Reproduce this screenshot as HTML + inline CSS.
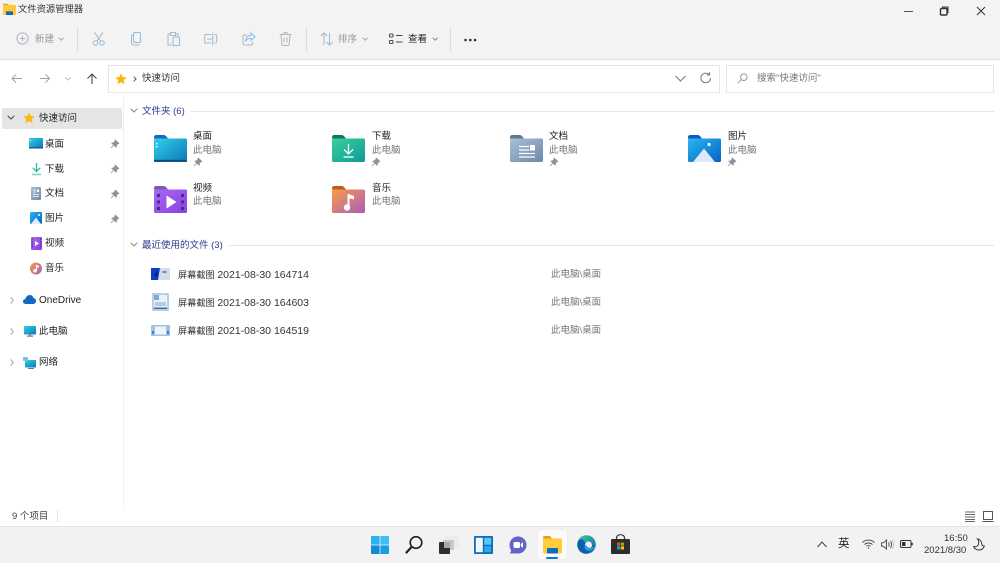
<!DOCTYPE html>
<html lang="zh"><head><meta charset="utf-8"><title>文件资源管理器</title>
<style>
html,body{margin:0;padding:0;background:#fff}
#r{position:relative;width:1000px;height:563px;overflow:hidden;background:#fff;font-family:"Liberation Sans","Noto Sans CJK SC",sans-serif;color:#222;filter:blur(.3px)}
#r div,#r svg{position:absolute}
.t{font-size:9.5px;line-height:14px;white-space:nowrap;margin-top:1px}
.u{margin-top:2px}
.n{font-size:10.5px}
.g{color:#767676}
.h{color:#2b3a8c}
.d{color:#9a9a9a}
svg{overflow:visible}
</style></head><body><div id="r">
<svg width="0" height="0"><defs>
<g id="pin"><path d="M5.2 1 8.8 4.4 7.5 4.9 6.3 6.8 6.1 8.2 1.9 4.2 3.4 3.9 4.9 2.5Z M3.6 6.4 1 9" fill="#8b939b" stroke="#8b939b" stroke-width=".8"/></g>
<linearGradient id="gBlue" x1="0" y1="0" x2="1" y2="1"><stop offset="0" stop-color="#32d0e6"/><stop offset="1" stop-color="#0a78b8"/></linearGradient>
<linearGradient id="gGreen" x1="0" y1="0" x2="1" y2="1"><stop offset="0" stop-color="#38d196"/><stop offset="1" stop-color="#0e9a9a"/></linearGradient>
<linearGradient id="gDoc" x1="0" y1="0" x2="1" y2="1"><stop offset="0" stop-color="#a9bfd8"/><stop offset="1" stop-color="#6d89a6"/></linearGradient>
<linearGradient id="gPic" x1="0" y1="0" x2="1" y2="1"><stop offset="0" stop-color="#29b6f0"/><stop offset="1" stop-color="#0563c1"/></linearGradient>
<linearGradient id="gVid" x1="0" y1="0" x2="1" y2="1"><stop offset="0" stop-color="#a968ea"/><stop offset="1" stop-color="#8a3fe8"/></linearGradient>
<linearGradient id="gMus" x1="0" y1="0" x2="1" y2="1"><stop offset="0" stop-color="#fb9a4a"/><stop offset="1" stop-color="#a95db8"/></linearGradient>
<linearGradient id="gEdge" x1="0" y1="0" x2="1" y2="1"><stop offset="0" stop-color="#3fd08a"/><stop offset="1" stop-color="#0a63b8"/></linearGradient>
<g id="star"><path d="M6 .4 7.700 4 11.700 4.500 8.800 7.200 9.600 11.200 6 9.200 2.400 11.200 3.200 7.200 .3 4.500 4.300 4Z" fill="#f9b90f"/></g>
<path id="chevD" d="M0 0 3 3 6 0" fill="none" stroke-linecap="round"/>
<path id="chevS" d="M0 0 2.200 2.200 4.400 0" fill="none" stroke-linecap="round"/>
</defs></svg>

<!-- top chrome -->
<div style="left:0;top:0;width:1000px;height:59px;background:#f3f3f3;border-bottom:1px solid #e2e2e2"></div>
<svg style="left:3px;top:3px" width="13" height="12" viewBox="0 0 13 12"><path d="M0 1.500C0 1 .4.700 1 .7H4.500L6 2H0Z" fill="#e8a80f"/><rect y="2" width="13" height="10" rx="1" fill="#ffc83d"/><rect x="3" y="8.400" width="7" height="3.600" fill="#0f6cbd"/></svg>
<div class="t" style="left:18px;top:1px;color:#333;font-size:9.3px">文件资源管理器</div>
<!-- window controls -->
<svg style="left:900px;top:5px" width="90" height="12" viewBox="0 0 90 12" fill="none" stroke="#333"><path d="M4 6.500H13" stroke="#555"/><rect x="40.500" y="3.500" width="6.500" height="6.500" rx="1" stroke-width="1.400"/><path d="M42.500 3V2H48V7.500H47.300" stroke-width="1"/><path d="M77 2 85 10M85 2 77 10"/></svg>

<!-- toolbar -->
<svg style="left:16px;top:32px" width="14" height="14" viewBox="0 0 14 14" fill="none"><circle cx="6.500" cy="6.500" r="5.600" stroke="#b5b5b5"/><path d="M6.500 3.800V9.200M3.800 6.500H9.200" stroke="#8dbce4"/></svg>
<div class="t d" style="left:35px;top:32px">新建</div>
<svg style="left:59px;top:38px" width="5" height="3" stroke="#a5a5a5"><use href="#chevS"/></svg>
<div style="left:77px;top:27px;width:1px;height:25px;background:#dcdcdc"></div>
<div style="left:306px;top:27px;width:1px;height:25px;background:#dcdcdc"></div>
<div style="left:450px;top:27px;width:1px;height:25px;background:#dcdcdc"></div>
<svg style="left:92px;top:32px" width="14" height="14" viewBox="0 0 14 14" fill="none"><path d="M2.500 .5 8.500 9M11 .5 5 9" stroke="#b0b0b0"/><circle cx="3.500" cy="11" r="2.200" stroke="#8dbce4"/><circle cx="10" cy="11" r="2.200" stroke="#8dbce4"/></svg>
<svg style="left:130px;top:32px" width="13" height="14" viewBox="0 0 13 14" fill="none"><rect x="3.500" y=".5" width="7" height="10" rx="1.500" stroke="#8dbce4"/><path d="M3 2.500C1.800 3 1.500 3.500 1.500 4.500V10.500C1.500 12 2.500 13 4 13H8C8.800 13 9.300 12.500 9.500 12" stroke="#b5b5b5"/></svg>
<svg style="left:167px;top:32px" width="14" height="14" viewBox="0 0 14 14" fill="none"><path d="M3.500 2H1V13H5M8.500 2H11V4.500" stroke="#b5b5b5"/><rect x="3.500" y=".5" width="5" height="3" stroke="#b5b5b5"/><rect x="6" y="5" width="6.500" height="8.500" rx="1" stroke="#8dbce4"/></svg>
<svg style="left:204px;top:32px" width="14" height="14" viewBox="0 0 14 14" fill="none"><path d="M7 2.500H1.500C1 2.500.7 3 .7 3.500V10C.7 10.600 1 11 1.500 11H7M10.500 2.500H11.500C12.200 2.500 12.700 3 12.700 3.500V10C12.700 10.600 12.200 11 11.500 11H10.500" stroke="#b5b5b5"/><path d="M8.800 .5V13.500M3 7H8" stroke="#8dbce4"/></svg>
<svg style="left:242px;top:32px" width="14" height="14" viewBox="0 0 14 14" fill="none"><path d="M5 3H2.500C1.500 3 1 3.500 1 4.500V11.500C1 12.500 1.500 13 2.500 13H9C10 13 10.500 12.500 10.500 11.500V10" stroke="#b5b5b5"/><path d="M9 1 13 4.800 9 8.500V6.300C6.500 6.300 4.800 7.300 3.500 9.500 3.700 6 5.500 3.500 9 3.300Z" stroke="#8dbce4"/></svg>
<svg style="left:279px;top:32px" width="13" height="14" viewBox="0 0 13 14" fill="none" stroke="#b5b5b5"><path d="M.5 2.500H12.500M4.500 2.500C4.500 1 5 .5 6.500 .5S8.500 1 8.500 2.500M2 2.500 2.800 12C2.900 13 3.400 13.500 4.300 13.500H8.700C9.600 13.500 10.100 13 10.200 12L11 2.500M5 5.500V10.500M8 5.500V10.500"/></svg>
<svg style="left:320px;top:32px" width="14" height="14" viewBox="0 0 14 14" fill="none"><path d="M4 13V1M.8 4 4 .8 7.200 4" stroke="#b5b5b5"/><path d="M9.500 .8V13M6.500 10 9.500 13 12.800 10" stroke="#8dbce4"/></svg>
<div class="t d" style="left:338px;top:32px">排序</div>
<svg style="left:363px;top:38px" width="5" height="3" stroke="#a5a5a5"><use href="#chevS"/></svg>
<svg style="left:389px;top:33px" width="14" height="12" viewBox="0 0 14 12" fill="none" stroke="#444"><rect x=".5" y="1" width="3.500" height="3" rx="1"/><rect x=".5" y="7.500" width="3.500" height="3" rx="1"/><path d="M7 2.500H13.500M7 9H13.500"/></svg>
<div class="t" style="left:408px;top:32px;color:#222">查看</div>
<svg style="left:433px;top:38px" width="5" height="3" stroke="#888"><use href="#chevS"/></svg>
<svg style="left:464px;top:38px" width="13" height="4"><circle cx="1.500" cy="2" r="1.300" fill="#333"/><circle cx="6.300" cy="2" r="1.300" fill="#333"/><circle cx="11.100" cy="2" r="1.300" fill="#333"/></svg>

<!-- nav row -->
<svg style="left:11px;top:73px" width="90" height="12" viewBox="0 0 90 12" fill="none"><path d="M11 5.500H1M5 1.500 1 5.500 5 9.500" stroke="#a2a2a2"/><path d="M29 5.500H38.500M34.500 1.500 38.500 5.500 34.500 9.500" stroke="#a2a2a2"/><path d="M54 4.500 57 7 60 4.500" stroke="#bdbdbd"/><path d="M81 11V1.300M76.500 5.500 81 1 85.500 5.500" stroke="#444" stroke-width="1.100"/></svg>
<div style="left:108px;top:65px;width:610px;height:26px;border:1px solid #e5e5e5;background:#fff"></div>
<svg style="left:115px;top:73px" width="12" height="12"><use href="#star"/></svg>
<svg style="left:133px;top:76px" width="4" height="6" viewBox="0 0 4 6" fill="none" stroke="#555"><path d="M.7.700 3 3 .7 5.300"/></svg>
<div class="t" style="left:142px;top:71px;color:#333">快速访问</div>
<svg style="left:675px;top:75px" width="11" height="7" viewBox="0 0 11 7" fill="none" stroke="#777"><path d="M.5 1 5.500 6 10.500 1"/></svg>
<svg style="left:700px;top:72px" width="12" height="12" viewBox="0 0 12 12" fill="none" stroke="#777"><path d="M10.500 6A4.800 4.800 0 1 1 9 2.500M9.500 .3V3H6.800"/></svg>
<div style="left:726px;top:65px;width:266px;height:26px;border:1px solid #e5e5e5;background:#fff"></div>
<svg style="left:737px;top:73px" width="11" height="11" viewBox="0 0 11 11" fill="none" stroke="#999"><circle cx="6.800" cy="4.200" r="3.300"/><path d="M4.300 6.700 .8 10.200"/></svg>
<div class="t g" style="left:757px;top:71px">搜索"快速访问"</div>

<!-- sidebar -->
<div style="left:123px;top:96px;width:1px;height:410px;background:#efefef"></div>
<div style="left:2px;top:108px;width:120px;height:21px;background:#e5e5e5;border-radius:2px"></div>
<svg style="left:8px;top:116px;" width="7" height="5" stroke="#444"><use href="#chevD"/></svg>
<svg style="left:23px;top:112px" width="12" height="12"><use href="#star"/></svg>
<div class="t" style="left:39px;top:111px">快速访问</div>

<svg style="left:29px;top:138px" width="14" height="11" viewBox="0 0 14 11"><rect width="14" height="10.500" rx="1" fill="url(#gBlue)"/><rect y="9.300" width="14" height="1.200" fill="#0b4f7a"/><rect x="1" y="2" width="1" height="1" fill="#fff"/></svg>
<div class="t u" style="left:45px;top:136px">桌面</div>
<svg style="left:110px;top:139px" width="10" height="10"><use href="#pin"/></svg>

<svg style="left:31px;top:162px" width="11" height="14" viewBox="0 0 11 14" fill="none" stroke-width="1.300"><path d="M5.500 1V9M1.800 5.800 5.500 9.500 9.200 5.800" stroke="#2fb89c"/><path d="M1 12.500H10" stroke="#6ed4bd" stroke-width="1.500"/></svg>
<div class="t u" style="left:45px;top:161px">下载</div>
<svg style="left:110px;top:164px" width="10" height="10"><use href="#pin"/></svg>

<svg style="left:31px;top:187px" width="10" height="13" viewBox="0 0 10 13"><rect width="10" height="13" rx="1" fill="url(#gDoc)"/><path d="M2 3H5M2 5H5M2 7.500H8M2 9.500H8" stroke="#fff" stroke-width=".8"/><rect x="6" y="2.500" width="2" height="2.500" fill="#fff"/></svg>
<div class="t" style="left:45px;top:186px">文档</div>
<svg style="left:110px;top:189px" width="10" height="10"><use href="#pin"/></svg>

<svg style="left:30px;top:212px" width="12" height="12" viewBox="0 0 12 12"><rect width="12" height="12" rx="1" fill="url(#gPic)"/><path d="M1 12 6 5.500 11 12Z" fill="#dfeaff"/><circle cx="9" cy="3" r="1" fill="#fff"/></svg>
<div class="t" style="left:45px;top:211px">图片</div>
<svg style="left:110px;top:214px" width="10" height="10"><use href="#pin"/></svg>

<svg style="left:31px;top:237px" width="11" height="13" viewBox="0 0 11 13"><rect width="11" height="13" rx="1" fill="url(#gVid)"/><path d="M4 4 8 6.500 4 9Z" fill="#fff"/><path d="M1.200 1.500V11.500M9.800 1.500V11.500" stroke="#4b2a8f" stroke-width="1.200" stroke-dasharray="1.200 1.300"/></svg>
<div class="t" style="left:45px;top:236px">视频</div>

<svg style="left:30px;top:262px" width="12" height="13" viewBox="0 0 12 13"><circle cx="6" cy="6.500" r="6" fill="url(#gMus)"/><path d="M6.500 3V8.500" stroke="#fff" stroke-width="1.200"/><circle cx="5" cy="8.800" r="1.700" fill="#fff"/><path d="M6.500 3 9 4V5.500L6.500 5Z" fill="#fff"/></svg>
<div class="t" style="left:45px;top:261px">音乐</div>

<svg style="left:10px;top:297px" width="4" height="7" viewBox="0 0 4 8"><path d="M.5.500 3.500 4 .5 7.500" fill="none" stroke="#9b9b9b"/></svg>
<svg style="left:23px;top:295px" width="13" height="9" viewBox="0 0 13 9"><path d="M3 9C1 9 0 7.800 0 6.500 0 5 1 4.200 2.300 4 3 1.500 4.700 0 6.800 0 8.800 0 10 1.300 10.500 3 12 3.300 13 4.500 13 6 13 7.800 11.800 9 10 9Z" fill="#0f6cbd"/></svg>
<div class="t" style="left:39px;top:293px;font-size:10px">OneDrive</div>

<svg style="left:10px;top:328px" width="4" height="7" viewBox="0 0 4 8"><path d="M.5.500 3.500 4 .5 7.500" fill="none" stroke="#9b9b9b"/></svg>
<svg style="left:24px;top:326px" width="12" height="11" viewBox="0 0 12 11"><rect width="12" height="8.500" rx=".8" fill="url(#gBlue)"/><rect x="3" y="9.500" width="6" height="1.200" fill="#777"/><rect x="5" y="8.500" width="2" height="1" fill="#999"/></svg>
<div class="t" style="left:39px;top:324px">此电脑</div>

<svg style="left:10px;top:359px" width="4" height="7" viewBox="0 0 4 8"><path d="M.5.500 3.500 4 .5 7.500" fill="none" stroke="#9b9b9b"/></svg>
<svg style="left:23px;top:356px" width="13" height="13" viewBox="0 0 13 13"><rect x="2" y="4" width="11" height="7.500" rx=".6" fill="url(#gBlue)"/><rect x="5" y="12" width="6" height="1" fill="#777"/><rect x="0" y="1" width="5" height="4" rx=".5" fill="#7cc4d8"/></svg>
<div class="t" style="left:39px;top:355px">网络</div>

<!-- sections -->
<svg style="left:131px;top:109px" width="7" height="4" stroke="#8a8a8a"><use href="#chevD"/></svg>
<div class="t h" style="left:142px;top:104px">文件夹 (6)</div>
<div style="left:191px;top:111px;width:803px;height:1px;background:#e5e5e5"></div>
<svg style="left:131px;top:243px" width="7" height="4" stroke="#8a8a8a"><use href="#chevD"/></svg>
<div class="t h" style="left:142px;top:238px">最近使用的文件 (3)</div>
<div style="left:229px;top:245px;width:765px;height:1px;background:#e5e5e5"></div>

<!-- folders -->
<svg style="left:154px;top:135px" width="33" height="27" viewBox="0 0 33 27"><path d="M0 2C0 1 1 0 2 0H10C11 0 12 1 14 3.500H0Z" fill="#0f6cc8"/><rect y="3.500" width="33" height="23.500" rx="1.500" fill="url(#gBlue)"/><rect y="24.800" width="33" height="2" fill="#0c4e78"/><rect x="2" y="8" width="1.500" height="1.500" fill="#fff"/><rect x="2" y="11" width="1.500" height="1.500" fill="#fff"/></svg>
<div class="t u" style="left:193px;top:128px">桌面</div>
<div class="t g" style="left:193px;top:143px">此电脑</div>
<svg style="left:193px;top:157px" width="10" height="10"><use href="#pin"/></svg>

<svg style="left:332px;top:135px" width="33" height="27" viewBox="0 0 33 27"><path d="M0 2C0 1 1 0 2 0H10C11 0 12 1 14 3.500H0Z" fill="#0a7a60"/><rect y="3.500" width="33" height="23.500" rx="1.500" fill="url(#gGreen)"/><path d="M16.500 9V18.500M12 14.500 16.500 19 21 14.500" fill="none" stroke="#fff" stroke-width="1.300"/><path d="M11.500 22H21.500" stroke="#fff" stroke-width="1.300"/></svg>
<div class="t u" style="left:372px;top:128px">下载</div>
<div class="t g" style="left:372px;top:143px">此电脑</div>
<svg style="left:371px;top:157px" width="10" height="10"><use href="#pin"/></svg>

<svg style="left:510px;top:135px" width="33" height="27" viewBox="0 0 33 27"><path d="M0 2C0 1 1 0 2 0H10C11 0 12 1 14 3.500H0Z" fill="#5c7a8c"/><rect y="3.500" width="33" height="23.500" rx="1.500" fill="url(#gDoc)"/><path d="M9 11.500H19M9 15H19M9 18.500H25M9 22H25" stroke="#fff" stroke-width="1.200"/><rect x="20" y="10" width="5" height="5.500" fill="#fff"/></svg>
<div class="t u" style="left:549px;top:128px">文档</div>
<div class="t g" style="left:549px;top:143px">此电脑</div>
<svg style="left:549px;top:157px" width="10" height="10"><use href="#pin"/></svg>

<svg style="left:688px;top:135px" width="33" height="27" viewBox="0 0 33 27"><path d="M0 2C0 1 1 0 2 0H10C11 0 12 1 14 3.500H0Z" fill="#0a5cc0"/><rect y="3.500" width="33" height="23.500" rx="1.500" fill="url(#gPic)"/><path d="M5 27 16 13.500 27 27Z" fill="#dfe8fb"/><circle cx="21" cy="9.500" r="1.600" fill="#fff"/></svg>
<div class="t u" style="left:728px;top:128px">图片</div>
<div class="t g" style="left:728px;top:143px">此电脑</div>
<svg style="left:727px;top:157px" width="10" height="10"><use href="#pin"/></svg>

<svg style="left:154px;top:186px" width="33" height="27" viewBox="0 0 33 27"><path d="M0 2C0 1 1 0 2 0H10C11 0 12 1 14 3.500H0Z" fill="#7e57b8"/><rect y="3.500" width="33" height="23.500" rx="1.500" fill="url(#gVid)"/><path d="M12.500 9.500 22.500 16 12.500 22.500Z" fill="#fff"/><g fill="#4a2a90"><rect x="3" y="8" width="3" height="3"/><rect x="3" y="14.500" width="3" height="3"/><rect x="3" y="21" width="3" height="3"/><rect x="27" y="8" width="3" height="3"/><rect x="27" y="14.500" width="3" height="3"/><rect x="27" y="21" width="3" height="3"/></g></svg>
<div class="t u" style="left:193px;top:180px">视频</div>
<div class="t g" style="left:193px;top:194px">此电脑</div>

<svg style="left:332px;top:186px" width="33" height="27" viewBox="0 0 33 27"><path d="M0 2C0 1 1 0 2 0H10C11 0 12 1 14 3.500H0Z" fill="#bf5f12"/><rect y="3.500" width="33" height="23.500" rx="1.500" fill="url(#gMus)"/><path d="M16.500 8V22" stroke="#fff" stroke-width="2"/><circle cx="15" cy="21.500" r="3.200" fill="#fff"/><path d="M16.500 8C18 9 22 9.500 22 10.500V13.500L16.500 12Z" fill="#fff"/></svg>
<div class="t u" style="left:372px;top:180px">音乐</div>
<div class="t g" style="left:372px;top:194px">此电脑</div>

<!-- recent files -->
<svg style="left:151px;top:267px" width="19" height="14" viewBox="0 0 19 14"><rect y="1" width="19" height="12" fill="#d5dce6"/><path d="M0 1H9L7 13H0Z" fill="#0b3fc4"/><path d="M3 8 7 3 6 10Z" fill="#0a1e70"/><rect x="11.500" y="4" width="4" height="2" fill="#5a8dc8"/></svg>
<div class="t" style="left:178px;top:267px;color:#333;font-size:9.200px">屏幕截图 <span class="n">2021-08-30 164714</span></div>
<div class="t g u" style="left:551px;top:266px">此电脑\桌面</div>

<svg style="left:152px;top:293px" width="17" height="18" viewBox="0 0 17 18"><rect width="17" height="18" rx="1" fill="#b9cfe4"/><rect x="2" y="2" width="13" height="14" fill="#e9f1f8"/><rect x="2" y="2" width="5" height="5" fill="#7eaad2"/><path d="M3 10H14M3 12H14" stroke="#7fa6cc"/><rect x="2" y="14.500" width="13" height="1.500" fill="#3a6da8"/></svg>
<div class="t" style="left:178px;top:295px;color:#333;font-size:9.200px">屏幕截图 <span class="n">2021-08-30 164603</span></div>
<div class="t g u" style="left:551px;top:294px">此电脑\桌面</div>

<svg style="left:151px;top:325px" width="19" height="11" viewBox="0 0 19 11"><rect width="19" height="11" rx="1" fill="#9fc3e4"/><rect x="4" y="1.500" width="11" height="8" fill="#eef4fa"/><rect x="1" y="6" width="2" height="3" fill="#3f7fc0"/><rect x="16" y="6" width="2" height="3" fill="#3f7fc0"/></svg>
<div class="t" style="left:178px;top:323px;color:#333;font-size:9.200px">屏幕截图 <span class="n">2021-08-30 164519</span></div>
<div class="t g u" style="left:551px;top:322px">此电脑\桌面</div>

<!-- status bar -->
<div class="t" style="left:12px;top:509px;color:#444">9 个项目</div>
<div style="left:57px;top:510px;width:1px;height:12px;background:#e5e5e5"></div>
<svg style="left:964px;top:511px" width="30" height="11" viewBox="0 0 30 11" fill="none" stroke="#666"><path d="M1 1H11M1 3.500H11M1 6H11M1 8.500H11M1 10.500H11" stroke-width=".9"/><rect x="19.500" y=".5" width="9" height="8" stroke="#555"/><path d="M18.500 10.500H29.500" stroke="#555"/></svg>

<!-- taskbar -->
<div style="left:0;top:526px;width:1000px;height:37px;background:#f2f2f2;border-top:1px solid #e4e4e4;box-sizing:border-box"></div>
<div style="left:538px;top:530px;width:29px;height:29px;background:#fbfbfb;border-radius:3px;box-shadow:0 0 1px #ddd"></div>
<div style="left:546px;top:557px;width:12px;height:2px;background:#0a78d4;border-radius:1px"></div>

<svg style="left:371px;top:536px" width="18" height="18" viewBox="0 0 18 18"><rect width="8.600" height="8.600" fill="#29b4ef"/><rect x="9.400" width="8.600" height="8.600" fill="#3cc0f5"/><rect y="9.400" width="8.600" height="8.600" fill="#0f8ed6"/><rect x="9.400" y="9.400" width="8.600" height="8.600" fill="#1a9fe4"/></svg>
<svg style="left:405px;top:535px" width="19" height="19" viewBox="0 0 19 19" fill="none" stroke="#222"><circle cx="11" cy="7.500" r="5.800" stroke-width="1.600"/><path d="M6.500 12 1.500 17.500" stroke-width="2.200" stroke-linecap="round"/></svg>
<svg style="left:439px;top:536px" width="20" height="18" viewBox="0 0 20 18"><rect x="6" y="0" width="14" height="12" rx="1" fill="#ebebeb"/><rect x="4" y="4" width="11" height="10" fill="#c8c8c8"/><rect x="0" y="6" width="11" height="12" rx="1" fill="#2e2e2e"/><rect x="5" y="6" width="6" height="6" fill="#a8a8a8"/></svg>
<svg style="left:474px;top:536px" width="19" height="18" viewBox="0 0 19 18"><rect width="19" height="18" rx="1" fill="#0f6cbd"/><rect x="1.800" y="1.800" width="7" height="14.400" fill="#f2f7fb"/><rect x="10.200" y="1.800" width="7" height="7" fill="#55c6f7"/><rect x="10.200" y="10.200" width="7" height="6" fill="#2ea7ea"/></svg>
<svg style="left:509px;top:536px" width="18" height="18" viewBox="0 0 18 18"><path d="M9 0.500C13.800 0.500 17.500 4.200 17.500 9S13.800 17.500 9 17.500H1.500C1 17.500 .8 17 1.100 16.600L2.300 14.700C1.200 13.200 .5 11.200 .5 9 .5 4.200 4.200 .5 9 .5Z" fill="#6264c9"/><rect x="4.500" y="6" width="6.500" height="6" rx="1.200" fill="#fff"/><path d="M11.800 8 14 6.300V11.700L11.800 10Z" fill="#fff"/></svg>
<svg style="left:543px;top:536px" width="19" height="18" viewBox="0 0 19 18"><path d="M0 1.500C0 .7.500 0 1.300 0H7L9 2.500H0Z" fill="#e0a013"/><rect y="2.500" width="19" height="15" rx="1" fill="#ffcb3d"/><rect x="4" y="12" width="11" height="5.500" rx="1" fill="#0f6cbd"/></svg>
<svg style="left:577px;top:535px" width="19" height="19" viewBox="0 0 19 19"><circle cx="9.500" cy="9.500" r="9.300" fill="url(#gEdge)"/><path d="M18.800 11H8.500C8 14 10.500 16 14 15.500 12.500 17.800 10.500 18.800 8.500 18.800 3.500 18.500 .3 14.500 .3 9.500 .3 8 1 6 2 5 5 2.800 7.500 6 7.500 7.500Z" fill="#0b5fb0"/><circle cx="11.500" cy="10" r="3.500" fill="#f2f2f2"/><path d="M7.500 11C7.200 14 9.500 16.500 13.500 15.500 15.500 14.500 17 13.500 18 11.500 16 13 13 13 11.500 12.500 10 12 9.500 11 9.500 10Z" fill="#2b9fdd"/></svg>
<svg style="left:611px;top:534px" width="19" height="20" viewBox="0 0 19 20"><path d="M5.500 6V3.500C5.500 1.800 7.500.7 9.500.7S13.500 1.800 13.500 3.500V6" fill="none" stroke="#333" stroke-width="1.200"/><rect y="5" width="19" height="15" rx="1.300" fill="#2d2d2d"/><rect x="6" y="8.500" width="3.200" height="3.200" fill="#f25022"/><rect x="9.800" y="8.500" width="3.200" height="3.200" fill="#7fba00"/><rect x="6" y="12.300" width="3.200" height="3.200" fill="#00a4ef"/><rect x="9.800" y="12.300" width="3.200" height="3.200" fill="#ffb900"/></svg>

<!-- tray -->
<svg style="left:817px;top:541px" width="10" height="7" viewBox="0 0 10 7" fill="none" stroke="#444"><path d="M.5 6 5 1 9.500 6"/></svg>
<div class="t" style="left:838px;top:536px;font-size:11.500px;color:#222">英</div>
<svg style="left:862px;top:539px" width="13" height="10" viewBox="0 0 13 10" fill="none" stroke="#444" stroke-width=".9"><path d="M.5 3.500C4 .3 9 .3 12.500 3.500M2.500 5.500C4.800 3.500 8.200 3.500 10.500 5.500M4.300 7.200C5.500 6.300 7.500 6.300 8.700 7.200"/><circle cx="6.500" cy="9" r=".7" fill="#444" stroke="none"/></svg>
<svg style="left:881px;top:539px" width="13" height="11" viewBox="0 0 13 11" fill="none" stroke="#444" stroke-width=".9"><path d="M.5 3.800H2.500L5.500 1V10L2.500 7.200H.5Z"/><path d="M7.500 3.500C8.300 4.500 8.300 6.500 7.500 7.500M9.500 2C10.800 3.800 10.800 7.200 9.500 9"/><path d="M11.300 1C12.800 3.300 12.800 7.700 11.300 10" stroke="#bbb"/></svg>
<svg style="left:900px;top:540px" width="13" height="8" viewBox="0 0 13 8"><rect x=".5" y=".5" width="10.500" height="7" rx="1.200" fill="none" stroke="#333"/><rect x="2" y="2" width="3.500" height="4" fill="#333"/><rect x="11.500" y="2.800" width="1.300" height="2.400" fill="#333"/></svg>
<div class="t" style="left:944px;top:531px;line-height:13px;color:#333">16:50</div>
<div class="t" style="left:924px;top:543px;line-height:13px;color:#333">2021/8/30</div>
<svg style="left:973px;top:538px" width="12" height="13" viewBox="0 0 12 13" fill="none" stroke="#333"><path d="M4.500 .8C7 1.500 8.800 3.500 8.800 6 8.800 7.500 9.800 8 11.300 8 10.500 10.500 8.500 12 6 12 3 12 .8 10.200 .8 8.500 2.500 9 4.500 8.500 5.300 6.800 6 5 5.800 2.500 4.500 .8Z"/></svg>
</div></body></html>
